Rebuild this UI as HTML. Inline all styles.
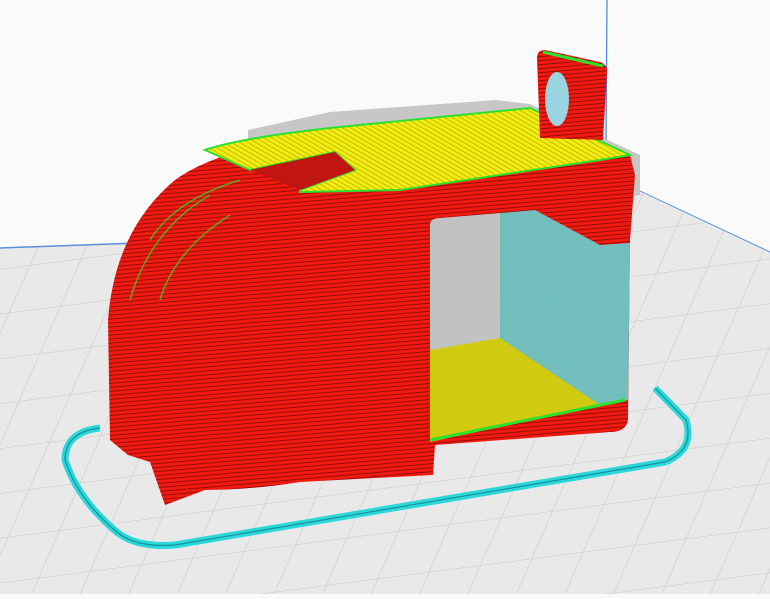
<!DOCTYPE html><html><head><style>body{margin:0;background:#fafafa;overflow:hidden}</style></head><body>
<svg width="770" height="594" viewBox="0 0 770 594" xmlns="http://www.w3.org/2000/svg">
<defs>
<pattern id="gr" width="48" height="48" patternUnits="userSpaceOnUse" patternTransform="skewX(-30) rotate(-8)">
<rect width="48" height="48" fill="#e9e9e9"/><path d="M0 0H48M0 0V48" stroke="#c9c9c9" stroke-width="1.2"/></pattern>
<pattern id="st" width="4" height="4" patternUnits="userSpaceOnUse" patternTransform="rotate(-5)">
<rect width="4" height="4" fill="#f21a10"/><rect y="3" width="4" height="1" fill="#6a0805" opacity=".7"/></pattern>
<pattern id="ys" width="4" height="4" patternUnits="userSpaceOnUse" patternTransform="rotate(30)">
<rect width="4" height="4" fill="#f4ee10"/><rect y="3" width="4" height="1" fill="#a09a00" opacity=".6"/></pattern>
</defs>
<rect width="770" height="594" fill="#fafafa"/>
<polygon points="0,248 140,243 606,175 770,252 770,594 0,594" fill="url(#gr)"/>
<path d="M0,248 L140,243" stroke="#5a8fe0" stroke-width="1.5"/>
<path d="M606,175 L770,252" stroke="#5a8fe0" stroke-width="1"/>
<path d="M607,0 L606,140" stroke="#4a80e8" stroke-width="1.2"/>
<polygon points="248,130 330,112 496,100 530,104 640,155 640,195 600,200 248,240" fill="#c7c7c7"/>
<path d="M100,428 Q65,432 65,460 Q78,500 118,533 Q138,548 175,545 L665,462 Q695,450 686,420 L655,388" fill="none" stroke="#2ad8dc" stroke-width="7"/>
<path d="M100,428 Q65,432 65,460 Q78,500 118,533 Q138,548 175,545 L665,462 Q695,450 686,420 L655,388" fill="none" stroke="#1a8f95" stroke-width="1.2"/>
<path d="M110,440 L108,320 Q115,230 175,180 Q215,150 330,130 L530,108 L630,155 L635,175 L630,240 L628,420 Q626,432 610,432 L435,445 L433,475 L300,482 Q250,490 205,490 L165,505 L150,462 L128,455 Z" fill="url(#st)"/>
<path d="M205,150 Q240,138 330,128 L530,108 L630,155 L600,160 L400,190 L300,192 L300,190 L355,170 L335,152 L250,170 Z" fill="url(#ys)" stroke="#2ee02e" stroke-width="2"/>
<path d="M335,152 L355,170 L300,190 L250,170 Z" fill="#c01510"/>
<path d="M150,240 Q175,200 240,180 M130,300 Q150,230 210,195 M160,300 Q175,250 230,215" stroke="#2ee02e" stroke-width="1.5" fill="none" opacity=".7"/>
<path d="M430,225 Q430,218 440,218 L500,213 L500,345 L430,350 Z" fill="#c2c2c2"/>
<path d="M500,213 L535,210 L600,245 L630,243 L628,400 L600,405 L500,340 Z" fill="#6cc8c8" opacity=".95"/>
<path d="M430,350 L500,338 L600,405 L430,442 Z" fill="#d0ca10"/>
<path d="M430,440 L625,400" stroke="#2ee02e" stroke-width="3"/>
<path d="M537,58 Q537,50 545,50 L600,62 Q608,65 607,72 L603,140 L540,138 Z" fill="url(#st)"/>
<path d="M543,52 L603,66" stroke="#2ee02e" stroke-width="3"/>
<ellipse cx="557" cy="99" rx="12" ry="27" fill="#9ad4e0"/>
</svg>
</body></html>
